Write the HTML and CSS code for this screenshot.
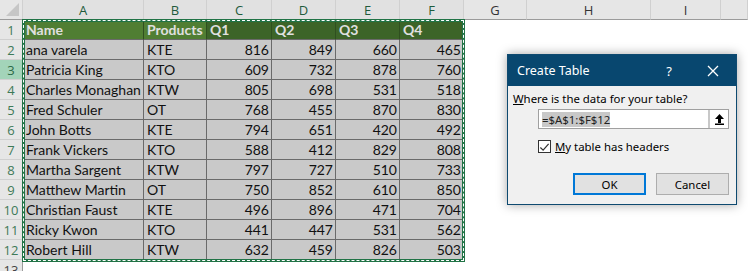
FILE: index.html
```html
<!DOCTYPE html>
<html>
<head>
<meta charset="utf-8">
<link rel="stylesheet" href="styles.css">
</head>
<body>
<div class="sheet">
  <div class="grid">
    <div class="corner"><div class="tri"></div></div>
    <div class="ch sel">A</div><div class="ch sel">B</div><div class="ch sel">C</div><div class="ch sel">D</div><div class="ch sel">E</div><div class="ch sel">F</div><div class="ch">G</div><div class="ch">H</div><div class="ch">I</div><div class="ch last"></div>

    <div class="rh sel">1</div><div class="hd hl">Name</div><div class="hd hl">Products</div><div class="hd">Q1</div><div class="hd">Q2</div><div class="hd">Q3</div><div class="hd">Q4</div><div class="e"></div><div class="e"></div><div class="e"></div><div class="e"></div>

    <div class="rh sel">2</div><div class="c">ana varela</div><div class="c">KTE</div><div class="c n">816</div><div class="c n">849</div><div class="c n">660</div><div class="c n">465</div><div class="e"></div><div class="e"></div><div class="e"></div><div class="e"></div>
    <div class="rh act">3</div><div class="c">Patricia King</div><div class="c">KTO</div><div class="c n">609</div><div class="c n">732</div><div class="c n">878</div><div class="c n">760</div><div class="e"></div><div class="e"></div><div class="e"></div><div class="e"></div>
    <div class="rh sel">4</div><div class="c">Charles Monaghan</div><div class="c">KTW</div><div class="c n">805</div><div class="c n">698</div><div class="c n">531</div><div class="c n">518</div><div class="e"></div><div class="e"></div><div class="e"></div><div class="e"></div>
    <div class="rh sel">5</div><div class="c">Fred Schuler</div><div class="c">OT</div><div class="c n">768</div><div class="c n">455</div><div class="c n">870</div><div class="c n">830</div><div class="e"></div><div class="e"></div><div class="e"></div><div class="e"></div>
    <div class="rh sel">6</div><div class="c">John Botts</div><div class="c">KTE</div><div class="c n">794</div><div class="c n">651</div><div class="c n">420</div><div class="c n">492</div><div class="e"></div><div class="e"></div><div class="e"></div><div class="e"></div>
    <div class="rh sel">7</div><div class="c">Frank Vickers</div><div class="c">KTO</div><div class="c n">588</div><div class="c n">412</div><div class="c n">829</div><div class="c n">808</div><div class="e"></div><div class="e"></div><div class="e"></div><div class="e"></div>
    <div class="rh sel">8</div><div class="c">Martha Sargent</div><div class="c">KTW</div><div class="c n">797</div><div class="c n">727</div><div class="c n">510</div><div class="c n">733</div><div class="e"></div><div class="e"></div><div class="e"></div><div class="e"></div>
    <div class="rh sel">9</div><div class="c">Matthew Martin</div><div class="c">OT</div><div class="c n">750</div><div class="c n">852</div><div class="c n">610</div><div class="c n">850</div><div class="e"></div><div class="e"></div><div class="e"></div><div class="e"></div>
    <div class="rh sel">10</div><div class="c">Christian Faust</div><div class="c">KTE</div><div class="c n">496</div><div class="c n">896</div><div class="c n">471</div><div class="c n">704</div><div class="e"></div><div class="e"></div><div class="e"></div><div class="e"></div>
    <div class="rh sel">11</div><div class="c">Ricky Kwon</div><div class="c">KTO</div><div class="c n">441</div><div class="c n">447</div><div class="c n">531</div><div class="c n">562</div><div class="e"></div><div class="e"></div><div class="e"></div><div class="e"></div>
    <div class="rh sel">12</div><div class="c">Robert Hill</div><div class="c">KTW</div><div class="c n">632</div><div class="c n">459</div><div class="c n">826</div><div class="c n">503</div><div class="e"></div><div class="e"></div><div class="e"></div><div class="e"></div>
    <div class="rh">13</div><div class="e"></div><div class="e"></div><div class="e"></div><div class="e"></div><div class="e"></div><div class="e"></div><div class="e"></div><div class="e"></div><div class="e"></div><div class="e"></div>
  </div>

  <div class="marquee"><div class="ants"></div></div>

  <div class="dialog">
    <div class="titlebar">
      <span class="title">Create Table</span>
      <span class="help">?</span>
      <svg class="close" width="12" height="12" viewBox="0 0 12 12"><path d="M1 1 L11 11 M11 1 L1 11" stroke="#fff" stroke-width="1.3" fill="none"/></svg>
    </div>
    <div class="body">
      <div class="label"><u>W</u>here is the data for your table?</div>
      <div class="rangebox">
        <div class="rangeinput"><span class="seltext">=$A$1:$F$12</span></div>
        <div class="rangebtn"><svg width="11" height="12" viewBox="0 0 11 12"><path d="M5.5 1 L10 6 L7 6 L7 10 L4 10 L4 6 L1 6 Z" fill="#000"/><rect x="1" y="10.5" width="9" height="1.5" fill="#000"/></svg></div>
      </div>
      <div class="check">
        <div class="box"><svg width="12" height="12" viewBox="0 0 12 12"><path d="M1.5 6.5 L4.5 9.5 L10.5 2.5" stroke="#333" stroke-width="1.3" fill="none"/></svg></div>
        <span><u>M</u>y table has headers</span>
      </div>
      <div class="buttons">
        <div class="btn ok">OK</div>
        <div class="btn">Cancel</div>
      </div>
    </div>
  </div>
</div>
</body>
</html>
```
FILE: styles.css
```css
html, body {
  margin: 0;
  padding: 0;
  background: #fff;
}
.sheet {
  position: relative;
  width: 748px;
  height: 271px;
  overflow: hidden;
  font-family: Lato, "Liberation Sans", sans-serif;
  font-size: 14px;
}
.grid {
  display: grid;
  grid-template-columns: 23px 121px 63px 65px 64px 64px 64px 63px 124px 70px 1fr;
  grid-template-rows: repeat(13, 20px) 20px;
}
.grid > div {
  box-sizing: border-box;
  overflow: hidden;
  white-space: nowrap;
}
.corner {
  background: #e6e6e6;
  border-right: 1px solid #d0d0d0;
  border-bottom: 1px solid #9b9b9b;
  position: relative;
}
.tri {
  position: absolute;
  right: 3px;
  bottom: 3px;
  width: 0;
  height: 0;
  border-left: 13px solid transparent;
  border-bottom: 13px solid #c6c6c6;
}
.ch {
  background: #e6e6e6;
  border-right: 1px solid #d0d0d0;
  border-bottom: 1px solid #9b9b9b;
  text-align: center;
  line-height: 20px;
  color: #333;
  font-family: "Open Sans", "Liberation Sans", sans-serif;
  font-size: 13px;
}
.ch.sel {
  background: #e1e1e1;
  color: #1f5b3c;
}
.rh {
  background: #e6e6e6;
  border-right: 1px solid #9b9b9b;
  border-bottom: 1px solid #d0d0d0;
  text-align: center;
  line-height: 20px;
  color: #444;
  font-family: "Open Sans", "Liberation Sans", sans-serif;
  font-size: 13px;
}
.rh.sel {
  color: #3e7a58;
}
.rh.act {
  background: #a3d4b9;
  color: #2b6a47;
}
.hd {
  background: #3c6428;
  color: #e0e0e0;
  font-weight: bold;
  line-height: 20px;
  padding-left: 3px;
  border-right: 1px solid #2f4f20;
  border-bottom: 1px solid #6a6a6a;
}
.hd.hl {
  background: #507e33;
}
.c {
  background: #c9c9c9;
  color: #111;
  line-height: 20px;
  padding-left: 3px;
  border-right: 1px solid #6a6a6a;
  border-bottom: 1px solid #6a6a6a;
}
.c.n {
  text-align: right;
  padding-right: 2px;
  padding-left: 0;
}
.e {
  background: #fff;
}
.marquee {
  position: absolute;
  left: 22px;
  top: 19px;
  width: 443px;
  height: 243px;
  box-sizing: border-box;
  border: 3px solid #217346;
}
.ants {
  position: absolute;
  left: -2px;
  top: -2px;
  right: -2px;
  bottom: -2px;
  border: 1px dashed #fff;
}
.dialog {
  position: absolute;
  left: 507px;
  top: 54px;
  width: 230px;
  height: 151px;
  box-sizing: border-box;
  border: 1px solid #0e4a70;
  background: #f0f0f0;
  box-shadow: 0 0 10px rgba(0,0,0,0.35);
  font-family: "Noto Sans", "Open Sans", sans-serif;
  font-size: 11.4px;
  color: #000;
  display: flex;
  flex-direction: column;
}
.titlebar {
  background: #08476f;
  height: 31px;
  display: flex;
  align-items: center;
  color: #fff;
  padding-left: 9px;
  padding-right: 17px;
  flex: none;
}
.title {
  font-size: 12.5px;
  flex: 1;
}
.help {
  font-size: 13px;
  margin-right: 35px;
}
.close {
  display: block;
}
.body {
  padding: 5px 7px 0 5px;
  display: flex;
  flex-direction: column;
}
.label {
  line-height: 16px;
}
.rangebox {
  margin-top: 2px;
  margin-left: 25px;
  height: 20px;
  display: flex;
  border: 1px solid #a0a0a0;
  box-sizing: border-box;
  background: #fff;
}
.rangeinput {
  flex: 1;
  display: flex;
  align-items: center;
  padding-left: 3px;
}
.seltext {
  background: #c8c8c8;
  color: #222;
  line-height: 15px;
}
.rangebtn {
  width: 18px;
  border-left: 2px solid #c8c8c8;
  display: flex;
  align-items: center;
  justify-content: center;
  background: #fff;
}
.check {
  margin-top: 10px;
  margin-left: 25px;
  display: flex;
  align-items: center;
  gap: 4px;
}
.box {
  width: 13px;
  height: 13px;
  box-sizing: border-box;
  border: 1px solid #333;
  background: #fff;
  display: flex;
  align-items: center;
  justify-content: center;
}
.box svg { display: block; }
.buttons {
  margin-top: 19px;
  display: flex;
  justify-content: flex-end;
  gap: 10px;
}
.btn {
  width: 73px;
  height: 22px;
  box-sizing: border-box;
  border: 1px solid #adadad;
  background: #e1e1e1;
  display: flex;
  align-items: center;
  justify-content: center;
}
.btn.ok {
  border: 2px solid #0078d7;
}
```
